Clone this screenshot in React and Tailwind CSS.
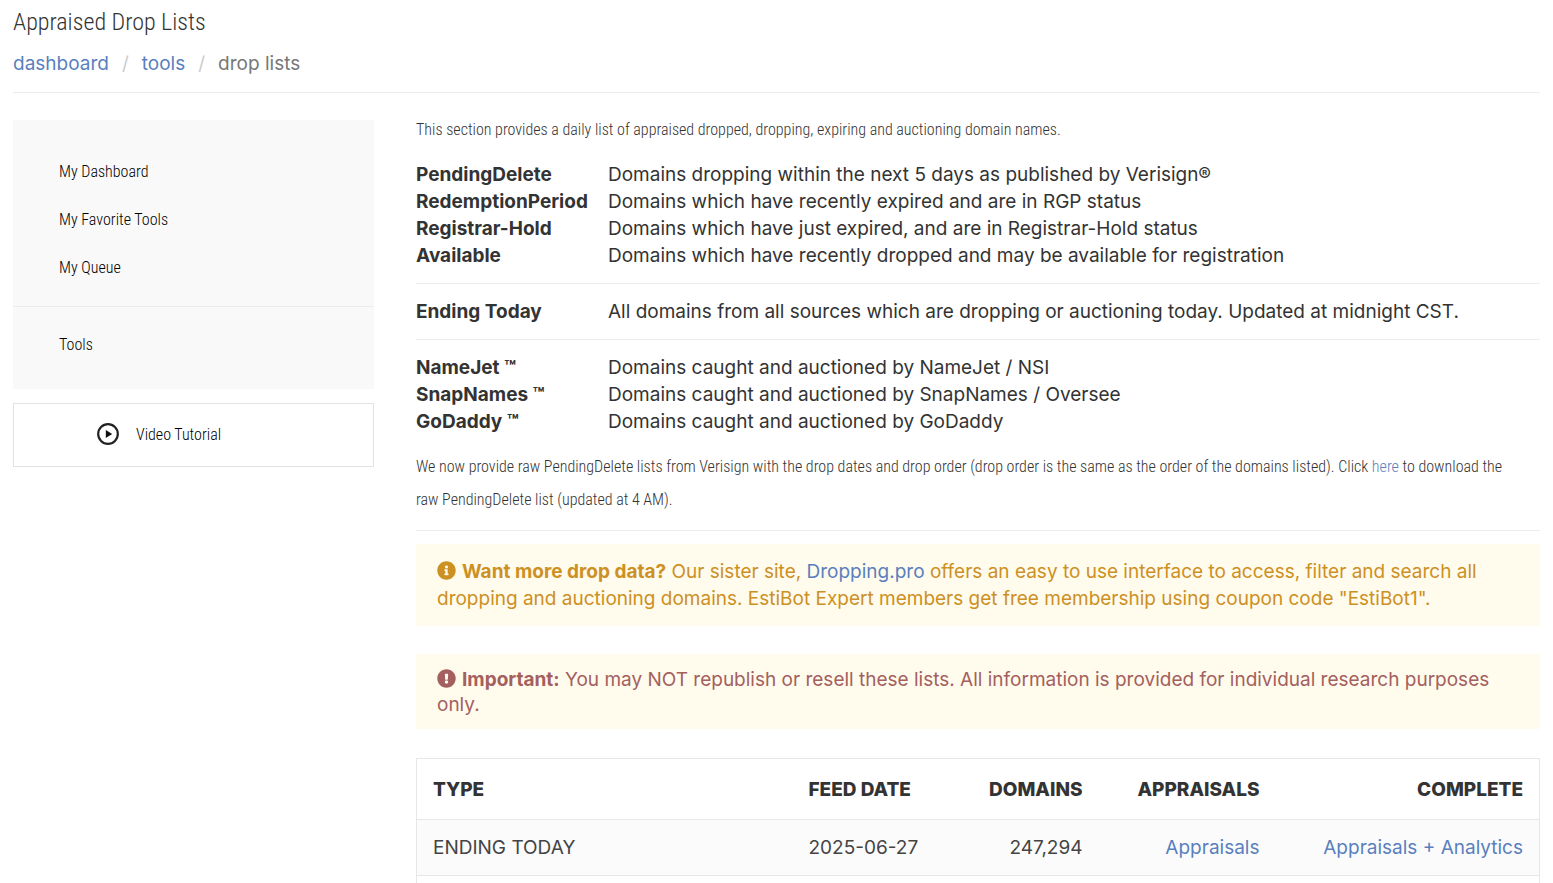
import { FaInfoCircle, FaExclamationCircle } from 'react-icons/fa'

const narrow = "font-['Roboto_Condensed','Arial_Narrow',sans-serif] font-light"

const menu = ['My Dashboard', 'My Favorite Tools', 'My Queue']

const glossary = [
  [
    ['PendingDelete', 'Domains dropping within the next 5 days as published by Verisign®'],
    ['RedemptionPeriod', 'Domains which have recently expired and are in RGP status'],
    ['Registrar-Hold', 'Domains which have just expired, and are in Registrar-Hold status'],
    ['Available', 'Domains which have recently dropped and may be available for registration'],
  ],
  [['Ending Today', 'All domains from all sources which are dropping or auctioning today. Updated at midnight CST.']],
  [
    ['NameJet ™', 'Domains caught and auctioned by NameJet / NSI'],
    ['SnapNames ™', 'Domains caught and auctioned by SnapNames / Oversee'],
    ['GoDaddy ™', 'Domains caught and auctioned by GoDaddy'],
  ],
]

const feeds = [
  { type: 'ENDING TODAY', date: '2025-06-27', domains: 247294 },
]

function PlayIcon() {
  return (
    <svg width="24" height="24" viewBox="0 0 24 24" fill="none" aria-hidden="true">
      <circle cx="12" cy="11" r="9.8" stroke="#222" strokeWidth="2.2" />
      <path d="M9.8 6.9l6.4 4.1-6.4 4.1z" fill="#111" />
    </svg>
  )
}

function Sidebar() {
  return (
    <aside className={`w-[361px] shrink-0 text-base text-black ${narrow}`}>
      <nav className="bg-[#f9f9f9]">
        <ul className="pt-7 pb-[14px] border-b border-[#ececec]">
          {menu.map(item => (
            <li key={item}>
              <a href="#" className="block px-[46px] leading-12">{item}</a>
            </li>
          ))}
        </ul>
        <a href="#" className="block px-[46px] pt-[14px] pb-5 leading-12">Tools</a>
      </nav>
      <a href="#" className="mt-[14px] flex h-16 items-center gap-4 border border-[#e2e2e2] pl-[82px]">
        <PlayIcon />
        Video Tutorial
      </a>
    </aside>
  )
}

export default function App() {
  return (
    <div className="min-h-screen bg-white px-[13px] font-['Inter',sans-serif] text-[19px] text-[#333]">
      <header className="border-b border-[#ececec] pt-1 pb-[15px]">
        <h1 className={`text-2xl leading-9 ${narrow}`}>Appraised Drop Lists</h1>
        <nav className="mt-[10px] flex gap-[13px] leading-[27px]">
          <a href="#" className="text-[#5a7fbd]">dashboard</a>
          <span className="text-[#ccc]">/</span>
          <a href="#" className="text-[#5a7fbd]">tools</a>
          <span className="text-[#ccc]">/</span>
          <span className="text-[#777]">drop lists</span>
        </nav>
      </header>

      <div className="mt-[27px] flex items-start gap-[42px]">
        <Sidebar />

        <main className="min-w-0 flex-1">
          <p className={`text-base leading-5 ${narrow}`}>
            This section provides a daily list of appraised dropped, dropping, expiring and auctioning domain names.
          </p>

          <div className="pt-2 pb-px">
            {glossary.map(group => (
              <dl key={group[0][0]} className="border-b border-[#ececec] py-[14px] leading-[27px] first:pt-[13px] last:border-0">
                {group.map(([term, text]) => (
                  <div key={term} className="flex">
                    <dt className="w-[192px] shrink-0 font-bold">{term}</dt>
                    <dd>{text}</dd>
                  </div>
                ))}
              </dl>
            ))}
          </div>

          <p className={`border-b border-[#ececec] pr-4 pb-[14px] text-base leading-[33px] ${narrow}`}>
            We now provide raw PendingDelete lists from Verisign with the drop dates and drop order (drop order is the same as the order of the domains listed). Click{' '}
            <a href="#" className="text-[#5a7fbd]">here</a> to download the raw PendingDelete list (updated at 4 AM).
          </p>

          <div className="mt-[13px] bg-[#fffbed] px-[21px] py-[14px] leading-[27px] text-[#cd9023]">
            <FaInfoCircle className="mr-[6px] inline-block align-[-2px]" />
            <strong>Want more drop data?</strong> Our sister site,{' '}
            <a href="#" className="text-[#5a7fbd]">Dropping.pro</a> offers an easy to use interface to access, filter and search all dropping and auctioning domains. EstiBot Expert members get free membership using coupon code "EstiBot1".
          </div>

          <div className="mt-7 bg-[#fffbed] px-[21px] pt-[13px] pb-3 leading-[25px] text-[#a3605f]">
            <FaExclamationCircle className="mr-[6px] inline-block align-[-2px]" />
            <strong>Important:</strong> You may NOT republish or resell these lists. All information is provided for individual research purposes only.
          </div>

          <table className="mt-[29px] w-full table-fixed border border-[#e7e7e7] leading-[27px]">
            <colgroup>
              <col />
              <col className="w-[140px]" />
              <col className="w-[166px]" />
              <col className="w-[177px]" />
              <col className="w-[264px]" />
            </colgroup>
            <thead>
              <tr className="border-b border-[#e7e7e7]">
                <th className="px-4 pt-[17px] pb-4 text-left font-extrabold">TYPE</th>
                <th className="px-4 pt-[17px] pb-4 text-left font-extrabold whitespace-nowrap">FEED DATE</th>
                <th className="px-4 pt-[17px] pb-4 text-right font-extrabold">DOMAINS</th>
                <th className="px-4 pt-[17px] pb-4 text-right font-extrabold">APPRAISALS</th>
                <th className="px-4 pt-[17px] pb-4 text-right font-extrabold">COMPLETE</th>
              </tr>
            </thead>
            <tbody>
              {feeds.map(f => (
                <tr key={f.type} className="border-b border-[#e7e7e7] bg-[#fbfbfb] text-[#444]">
                  <td className="px-4 py-[14px]">{f.type}</td>
                  <td className="px-4 py-[14px] whitespace-nowrap">{f.date}</td>
                  <td className="px-4 py-[14px] text-right">{f.domains.toLocaleString('en-US')}</td>
                  <td className="px-4 py-[14px] text-right"><a href="#" className="text-[#5a7fbd]">Appraisals</a></td>
                  <td className="px-4 py-[14px] text-right"><a href="#" className="text-[#5a7fbd]">Appraisals + Analytics</a></td>
                </tr>
              ))}
              <tr className="h-14">
                <td colSpan={5} />
              </tr>
            </tbody>
          </table>
        </main>
      </div>
    </div>
  )
}
